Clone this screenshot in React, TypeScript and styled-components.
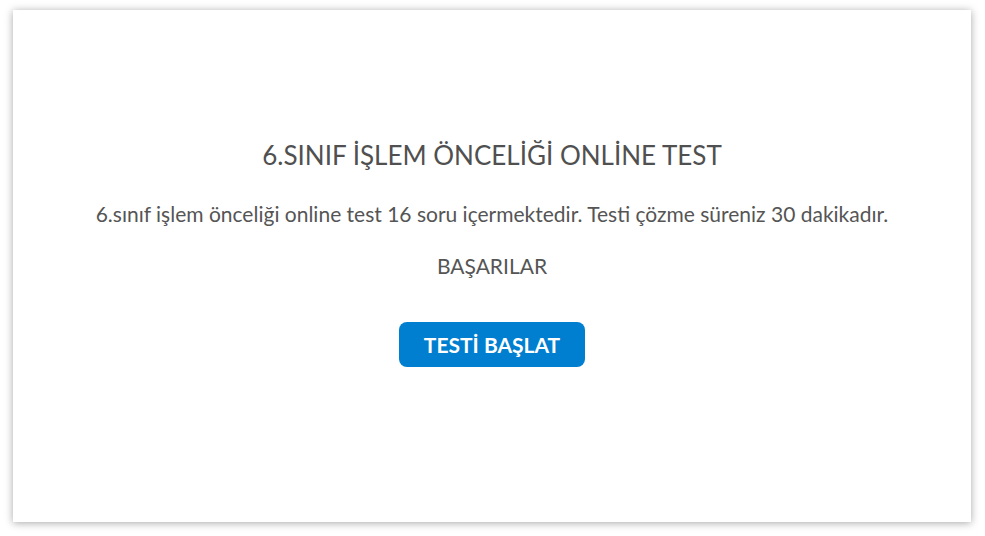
import React from "react"
import styled, { createGlobalStyle } from 'styled-components'

const Global = createGlobalStyle`
html, body {
    margin: 0;
    padding: 0;
    background: #FFF;
    font-family: Lato, "Noto Sans", sans-serif;
}
`

const Page = styled.div`
    padding: 10px 14px 14px 13px;
    box-sizing: border-box;
    width: 985px;
    height: 536px;
`

const Card = styled.div`
    height: 512px;
    background: #FFF;
    box-shadow: 0 1px 8px rgba(0, 0, 0, 0.35);
    display: flex;
    flex-direction: column;
    align-items: center;
    justify-content: flex-start;
    padding-top: 128px;
    box-sizing: border-box;
    color: #555;
    text-align: center;
`

const Title = styled.h1`
    margin: 0;
    font-size: 26px;
    font-weight: 400;
    line-height: 34px;
    color: #505050;
`

const Text = styled.p<{ gap: number }>`
    margin: ${p => p.gap}px 0 0;
    font-size: 21px;
    line-height: 30px;
    color: #555;
`

const Btn = styled.button`
    margin-top: 41px;
    background: #007ed0;
    border: none;
    border-radius: 8px;
    color: #FFF;
    font-family: Lato, "Noto Sans", sans-serif;
    font-weight: 700;
    font-size: 21px;
    padding: 0 25px;
    height: 45px;
    cursor: pointer;
`

const App: React.FC = () => (
    <Page>
        <Global />
        <Card>
            <Title>6.SINIF İŞLEM ÖNCELİĞİ ONLİNE TEST</Title>
            <Text gap={27}>6.sınıf işlem önceliği online test 16 soru içermektedir. Testi çözme süreniz 30 dakikadır.</Text>
            <Text gap={22}>BAŞARILAR</Text>
            <Btn>TESTİ BAŞLAT</Btn>
        </Card>
    </Page>
)

export default App
